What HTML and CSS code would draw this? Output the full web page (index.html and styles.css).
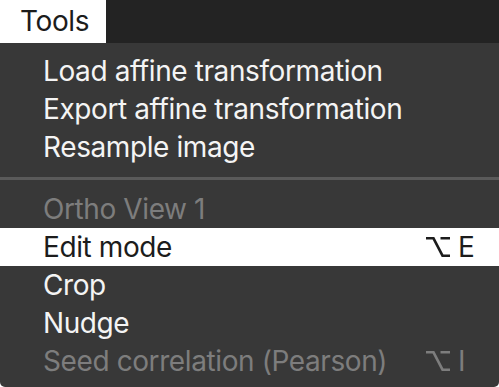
FILE: index.html
```html
<!DOCTYPE html>
<html>
<head>
<meta charset="utf-8">
<link rel="stylesheet" href="styles.css">
</head>
<body>
<div class="menubar">
  <div class="menubar-item">Tools</div>
</div>
<div class="menu">
  <div class="item">Load affine transformation</div>
  <div class="item">Export affine transformation</div>
  <div class="item">Resample image</div>
  <div class="separator"></div>
  <div class="item disabled">Ortho View 1</div>
  <div class="item selected">
    <span class="label">Edit mode</span>
    <span class="shortcut">
      <svg class="opt" viewBox="0 0 24 20" width="24" height="20"><path d="M0 1.3H7.5L16.5 18.7H24M14.5 1.3H24" fill="none" stroke="currentColor" stroke-width="2.6"/></svg>
      <span class="key">E</span>
    </span>
  </div>
  <div class="item">Crop</div>
  <div class="item">Nudge</div>
  <div class="item disabled">
    <span class="label">Seed correlation (Pearson)</span>
    <span class="shortcut">
      <svg class="opt" viewBox="0 0 24 20" width="24" height="20"><path d="M0 1.3H7.5L16.5 18.7H24M14.5 1.3H24" fill="none" stroke="currentColor" stroke-width="2.6"/></svg>
      <span class="key">I</span>
    </span>
  </div>
</div>
</body>
</html>
```
FILE: styles.css
```css
html, body {
  margin: 0;
  padding: 0;
  background: #ffffff;
}
body {
  width: 499px;
  height: 387px;
  overflow: hidden;
  font-family: Inter, "Liberation Sans", sans-serif;
  font-size: 28px;
  letter-spacing: -0.4px;
}
.menubar {
  display: flex;
  height: 43px;
  background: #232323;
}
.menubar-item {
  width: 86px;
  padding-left: 20px;
  background: #ffffff;
  color: #1c1c1c;
  line-height: 43px;
}
.menu {
  background: #383838;
  padding: 9px 0 7px;
  border-radius: 0 0 5px 5px;
}
.item {
  display: flex;
  align-items: center;
  height: 38px;
  line-height: 38px;
  padding-left: 43px;
  color: #f4f4f4;
  white-space: nowrap;
}
.item .label {
  flex: 1;
}
.item.disabled {
  color: #7d7d7d;
}
.item.selected {
  background: #ffffff;
  color: #1c1c1c;
}
.shortcut {
  width: 73px;
  display: flex;
  align-items: center;
}
.opt {
  display: block;
  margin-top: -1px;
}
.key {
  margin-left: 8px;
}
.separator {
  height: 3px;
  margin: 11px 0 10px;
  background: #5a5a5a;
}
```
